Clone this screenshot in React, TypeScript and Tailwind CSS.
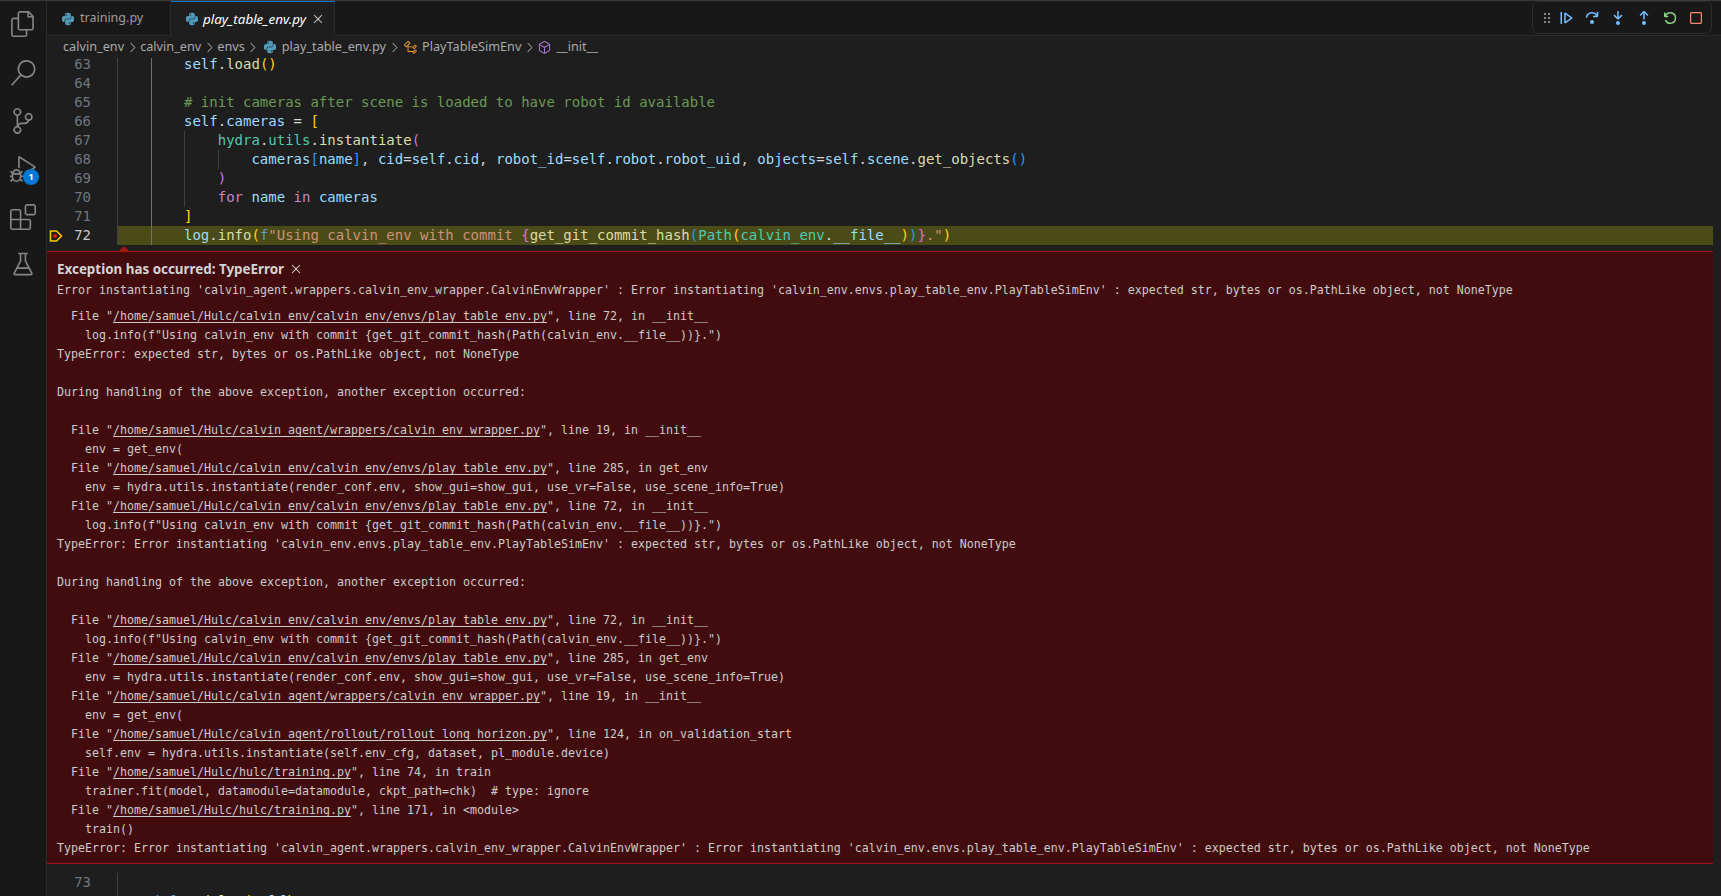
import {
  VscBeaker,
  VscClose,
  VscDebugAlt,
  VscDebugContinue,
  VscDebugRestart,
  VscDebugStepInto,
  VscDebugStepOut,
  VscDebugStepOver,
  VscDebugStop,
  VscExtensions,
  VscFiles,
  VscGripper,
  VscSearch,
  VscSourceControl,
  VscSymbolClass,
  VscSymbolMethod,
  VscChevronRight,
} from 'react-icons/vsc';
import { FaPython } from 'react-icons/fa';
import type { ReactNode } from 'react';

const mono = '[font-family:"DejaVu_Sans_Mono",monospace]';

const P = ({ c, children }: { c: string; children: ReactNode }) => <span style={{ color: c }}>{children}</span>;

const blue = '#9cdcfe';
const func = '#dcdcaa';
const teal = '#4ec9b0';
const yellow = '#ffd700';
const pink = '#da70d6';
const sky = '#179fff';
const orange = '#ce9178';
const kw = '#c586c0';
const green = '#6a9955';
const white = '#d4d4d4';

function CodeLine({ n, depth = 2, active, children }: { n: number; depth?: number; active?: boolean; children?: ReactNode }) {
  return (
    <div className="flex h-[19px] items-center">
      <div className="relative flex h-full w-[44px] shrink-0 items-center justify-end">
        {active && (
          <svg className="absolute left-[2px] top-[3px]" width="14" height="14" viewBox="0 0 14 14">
            <path d="M1.5 2h6l5 5-5 5h-6z" fill="none" stroke="#ffcc00" strokeWidth="1.5" />
            <circle cx="6" cy="7" r="2" fill="#e51400" />
          </svg>
        )}
        <span className={active ? 'text-[#c6c6c6]' : 'text-[#6e7681]'}>{n}</span>
      </div>
      <div className={`relative ml-[26px] flex h-full flex-1 items-center ${active ? 'bg-[#4b4b18]' : ''}`}>
        <div className="absolute left-[0px] top-0 h-full w-px bg-[#404040]" />
        {depth > 1 && <div className="absolute left-[34px] top-0 h-full w-px bg-[#707070]" />}
        {depth > 2 && <div className="absolute left-[67px] top-0 h-full w-px bg-[#404040]" />}
        {depth > 3 && <div className="absolute left-[101px] top-0 h-full w-px bg-[#404040]" />}
        <pre className={`${mono} pl-[67px] text-[14px] leading-[19px]`}>{children}</pre>
      </div>
    </div>
  );
}

function Link({ children }: { children: ReactNode }) {
  return <span className="underline underline-offset-2">{children}</span>;
}

const File = ({ path, rest }: { path: string; rest: string }) => (
  <div>
    {'  File "'}
    <Link>{path}</Link>
    {`", ${rest}`}
  </div>
);

const calvinEnv = '/home/samuel/Hulc/calvin_env/calvin_env/envs/play_table_env.py';
const wrapper = '/home/samuel/Hulc/calvin_agent/wrappers/calvin_env_wrapper.py';
const training = '/home/samuel/Hulc/hulc/training.py';
const logLine = '    log.info(f"Using calvin_env with commit {get_git_commit_hash(Path(calvin_env.__file__))}.")';
const instantiateLine = '    env = hydra.utils.instantiate(render_conf.env, show_gui=show_gui, use_vr=False, use_scene_info=True)';

function Exception() {
  return (
    <div className="relative mt-[6px] h-[613px] border-y border-[#a31515] bg-[#420b0d] pl-[10px] pr-2 text-[#cccccc]">
      <div className="absolute left-[71px] top-[-6px] h-0 w-0 border-x-[6px] border-b-[6px] border-x-transparent border-b-[#a31515]" />
      <div className="flex h-[29px] items-center gap-[4px] pt-[5px] font-['Noto_Sans',sans-serif] text-[13.4px] font-bold text-[#d4d4d4]">
        Exception has occurred: TypeError
        <VscClose className="text-[16px] font-normal" />
      </div>
      <pre className={`${mono} text-[11.63px] leading-[19px]`}>
        <div className="mb-[7px]">Error instantiating 'calvin_agent.wrappers.calvin_env_wrapper.CalvinEnvWrapper' : Error instantiating 'calvin_env.envs.play_table_env.PlayTableSimEnv' : expected str, bytes or os.PathLike object, not NoneType</div>
        <File path={calvinEnv} rest="line 72, in __init__" />
        <div>{logLine}</div>
        <div>TypeError: expected str, bytes or os.PathLike object, not NoneType</div>
        <div>&nbsp;</div>
        <div>During handling of the above exception, another exception occurred:</div>
        <div>&nbsp;</div>
        <File path={wrapper} rest="line 19, in __init__" />
        <div>    env = get_env(</div>
        <File path={calvinEnv} rest="line 285, in get_env" />
        <div>{instantiateLine}</div>
        <File path={calvinEnv} rest="line 72, in __init__" />
        <div>{logLine}</div>
        <div>TypeError: Error instantiating 'calvin_env.envs.play_table_env.PlayTableSimEnv' : expected str, bytes or os.PathLike object, not NoneType</div>
        <div>&nbsp;</div>
        <div>During handling of the above exception, another exception occurred:</div>
        <div>&nbsp;</div>
        <File path={calvinEnv} rest="line 72, in __init__" />
        <div>{logLine}</div>
        <File path={calvinEnv} rest="line 285, in get_env" />
        <div>{instantiateLine}</div>
        <File path={wrapper} rest="line 19, in __init__" />
        <div>    env = get_env(</div>
        <File path="/home/samuel/Hulc/calvin_agent/rollout/rollout_long_horizon.py" rest="line 124, in on_validation_start" />
        <div>    self.env = hydra.utils.instantiate(self.env_cfg, dataset, pl_module.device)</div>
        <File path={training} rest="line 74, in train" />
        <div>    trainer.fit(model, datamodule=datamodule, ckpt_path=chk)  # type: ignore</div>
        <File path={training} rest="line 171, in <module>" />
        <div>    train()</div>
        <div>TypeError: Error instantiating 'calvin_agent.wrappers.calvin_env_wrapper.CalvinEnvWrapper' : Error instantiating 'calvin_env.envs.play_table_env.PlayTableSimEnv' : expected str, bytes or os.PathLike object, not NoneType</div>
      </pre>
    </div>
  );
}

function Crumb({ children }: { children: ReactNode }) {
  return (
    <>
      {children}
      <VscChevronRight className="mx-[0.5px] text-[15px] text-[#a0a0a0]" />
    </>
  );
}

export default function App() {
  return (
    <div className="flex h-[896px] w-[1721px] overflow-hidden border-t border-[#3a3a3a] bg-[#1e1e1e] font-['Noto_Sans',sans-serif]">
      <div className="flex w-[47px] shrink-0 flex-col items-center border-r border-[#2b2b2b] bg-[#181818] pt-[10px] text-[#858585]">
        <VscFiles className="mb-[23px] text-[26px]" />
        <VscSearch className="mb-[22px] text-[26px]" />
        <VscSourceControl className="mb-[22px] text-[26px]" />
        <div className="relative mb-[22px]">
          <VscDebugAlt className="text-[26px]" />
          <div className="absolute left-[13px] top-[13px] flex h-4 w-4 items-center justify-center rounded-full bg-[#0078d4] text-[9px] font-bold text-white">1</div>
        </div>
        <VscExtensions className="mb-[21px] text-[26px]" />
        <VscBeaker className="text-[26px]" />
      </div>

      <div className="flex min-w-0 flex-1 flex-col">
        <div className="flex h-[35px] shrink-0 items-center justify-between border-b border-[#2b2b2b] bg-[#181818]">
          <div className="flex h-full">
            <div className="flex w-[124px] items-center border-r border-[#2b2b2b] pl-[14px] pt-[1px] text-[12.5px] text-[#9d9d9d]">
              <FaPython className="mr-[5px] text-[14px] text-[#519aba]" />
              training.py
            </div>
            <div className="mb-[-1px] flex w-[164px] items-center border-r border-t border-r-[#2b2b2b] border-t-[#0078d4] bg-[#1e1e1e] pl-[14px] text-[13.4px] italic text-white">
              <FaPython className="mr-[4px] text-[14px] not-italic text-[#519aba]" />
              play_table_env.py
              <VscClose className="ml-[4px] text-[16px] text-[#cccccc]" />
            </div>
          </div>
          <div className="mr-[9px] mt-[-1px] flex h-[33px] w-[180px] items-center gap-[10px] rounded-md border border-[#2b2b2b] bg-[#181818] pl-[6px]">
            <VscGripper className="mr-[-7px] text-[16px] text-[#858585]" />
            <VscDebugContinue className="text-[16px] text-[#75beff]" />
            <VscDebugStepOver className="text-[16px] text-[#75beff]" />
            <VscDebugStepInto className="text-[16px] text-[#75beff]" />
            <VscDebugStepOut className="text-[16px] text-[#75beff]" />
            <VscDebugRestart className="text-[16px] text-[#89d185]" />
            <VscDebugStop className="text-[16px] text-[#f48771]" />
          </div>
        </div>

        <div className="z-10 flex h-[22px] shrink-0 items-center bg-[#1e1e1e] pl-[16px] text-[12.7px] text-[#a9a9a9]">
          <Crumb>calvin_env</Crumb>
          <Crumb>calvin_env</Crumb>
          <Crumb>envs</Crumb>
          <Crumb>
            <FaPython className="ml-[2px] mr-[5px] text-[14px] text-[#519aba]" />
            play_table_env.py
          </Crumb>
          <Crumb>
            <VscSymbolClass className="ml-[1px] mr-[4px] text-[15px] text-[#ee9d28]" />
            PlayTableSimEnv
          </Crumb>
          <VscSymbolMethod className="mr-[4px] text-[15px] text-[#b180d7]" />
          __init__
        </div>

        <div className={`${mono} mr-[8px] mt-[-3px] flex-1 text-[14px] text-[#6e7681]`}>
          <CodeLine n={63}><P c={blue}>self</P><P c={white}>.</P><P c={func}>load</P><P c={yellow}>()</P></CodeLine>
          <CodeLine n={64} />
          <CodeLine n={65}><P c={green}># init cameras after scene is loaded to have robot id available</P></CodeLine>
          <CodeLine n={66}><P c={blue}>self</P><P c={white}>.</P><P c={blue}>cameras</P><P c={white}> = </P><P c={yellow}>[</P></CodeLine>
          <CodeLine n={67} depth={3}>{'    '}<P c={teal}>hydra</P><P c={white}>.</P><P c={teal}>utils</P><P c={white}>.</P><P c={func}>instantiate</P><P c={pink}>(</P></CodeLine>
          <CodeLine n={68} depth={4}>{'        '}<P c={blue}>cameras</P><P c={sky}>[</P><P c={blue}>name</P><P c={sky}>]</P><P c={white}>, </P><P c={blue}>cid</P><P c={white}>=</P><P c={blue}>self</P><P c={white}>.</P><P c={blue}>cid</P><P c={white}>, </P><P c={blue}>robot_id</P><P c={white}>=</P><P c={blue}>self</P><P c={white}>.</P><P c={blue}>robot</P><P c={white}>.</P><P c={blue}>robot_uid</P><P c={white}>, </P><P c={blue}>objects</P><P c={white}>=</P><P c={blue}>self</P><P c={white}>.</P><P c={blue}>scene</P><P c={white}>.</P><P c={func}>get_objects</P><P c={sky}>()</P></CodeLine>
          <CodeLine n={69} depth={3}>{'    '}<P c={pink}>)</P></CodeLine>
          <CodeLine n={70} depth={3}>{'    '}<P c={kw}>for</P> <P c={blue}>name</P> <P c={kw}>in</P> <P c={blue}>cameras</P></CodeLine>
          <CodeLine n={71}><P c={yellow}>]</P></CodeLine>
          <CodeLine n={72} active><P c={blue}>log</P><P c={white}>.</P><P c={func}>info</P><P c={yellow}>(</P><P c="#569cd6">f</P><P c={orange}>"Using calvin_env with commit </P><P c={pink}>{'{'}</P><P c={func}>get_git_commit_hash</P><P c={sky}>(</P><P c={teal}>Path</P><P c={yellow}>(</P><P c={teal}>calvin_env</P><P c={white}>.</P><P c={blue}>__file__</P><P c={yellow}>)</P><P c={sky}>)</P><P c={pink}>{'}'}</P><P c={orange}>."</P><P c={yellow}>)</P></CodeLine>
          <Exception />
          <div className="h-[9px]" />
          <CodeLine n={73} depth={1} />
          <div className="ml-[70px] h-[19px] border-l border-[#404040]">
            <pre className={`${mono} pl-[33px] text-[14px] leading-[19px]`}><P c="#569cd6">def</P> <P c={func}>__del__</P><P c={yellow}>(</P><P c={blue}>self</P><P c={yellow}>)</P><P c={white}>:</P></pre>
          </div>
        </div>
      </div>
    </div>
  );
}
